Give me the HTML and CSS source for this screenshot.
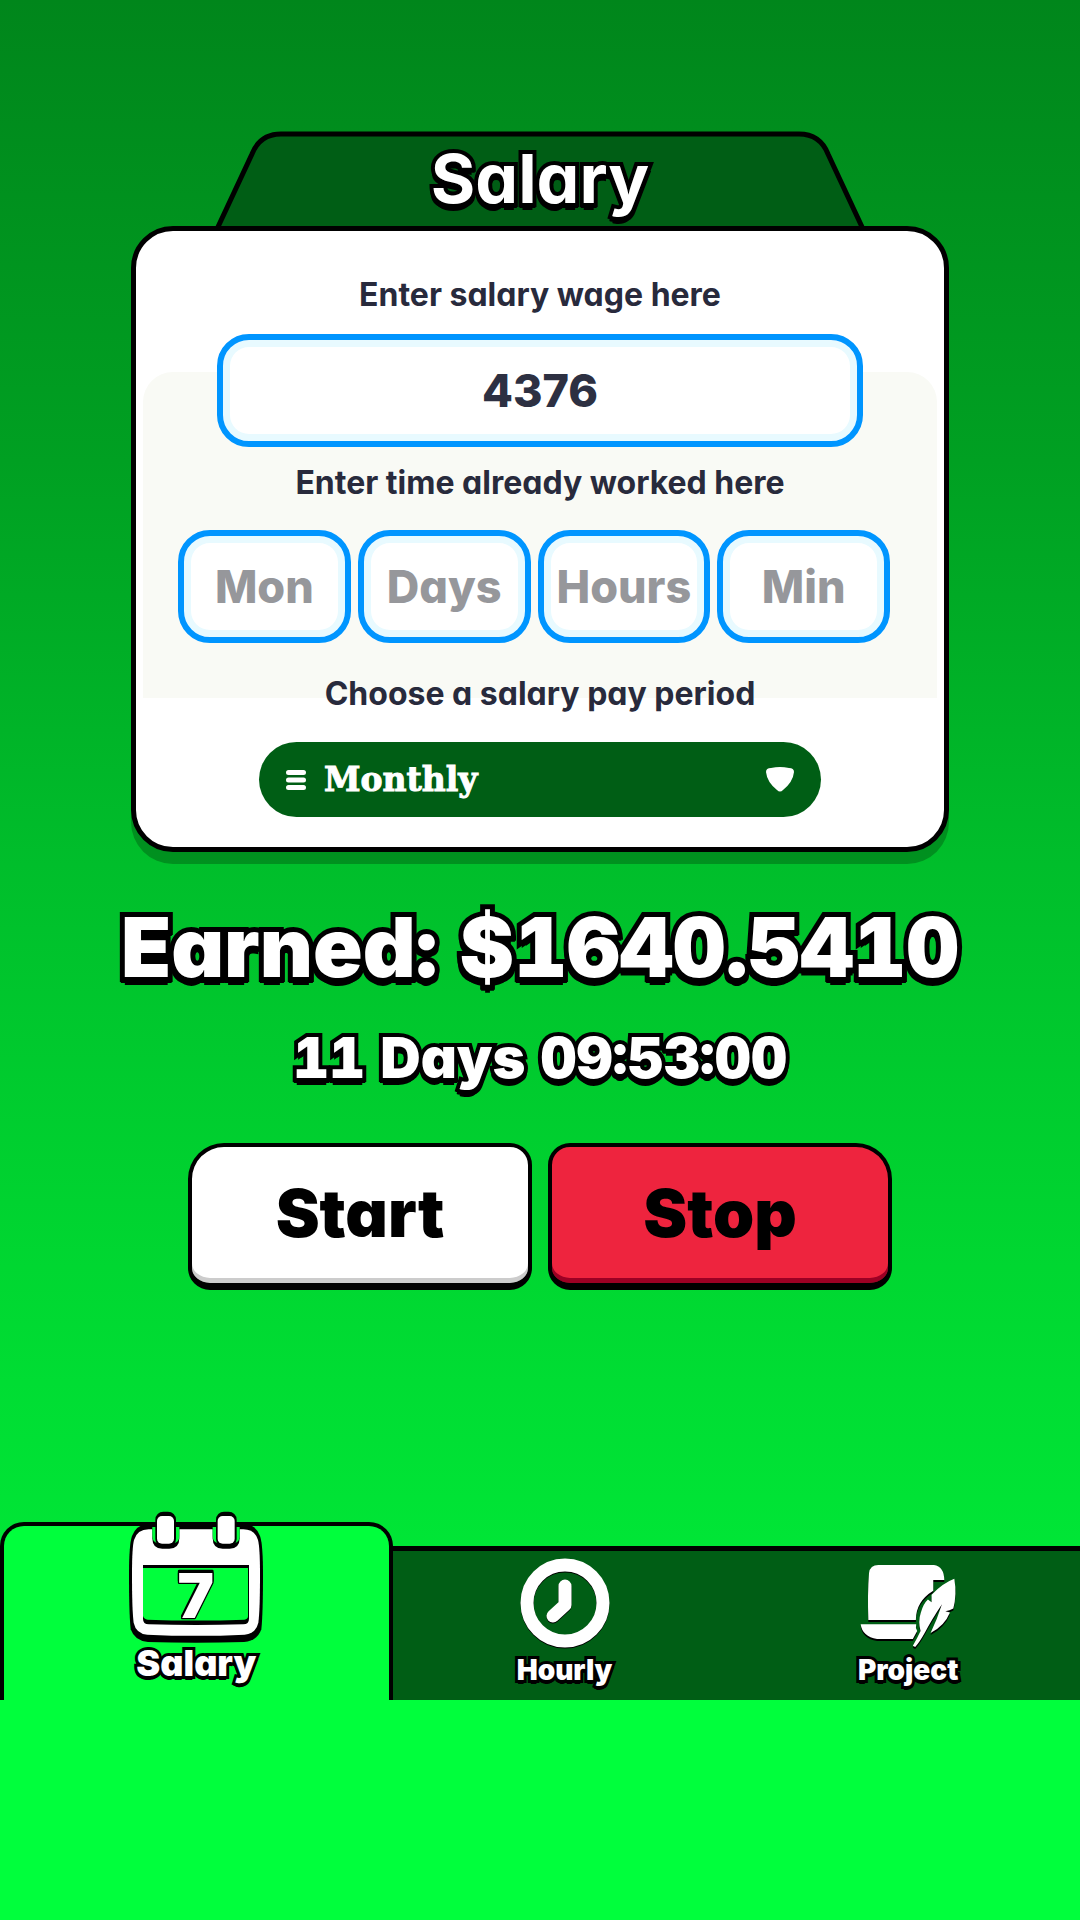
FILE: index.html
```html
<!DOCTYPE html>
<html lang="en">
<head>
    <meta charset="UTF-8">
    <meta name="viewport" content="width=device-width, initial-scale=1.0">
    <title>Salary</title>
    <link rel="stylesheet" href="styles.css">
</head>
<body>
    <main>
        <header class="title-tab">
            <svg class="title-shape" viewBox="0 0 652 98" aria-hidden="true">
                <path d="M3 98 L38 23 Q46 3 67 3 H585 Q606 3 614 23 L649 98" />
            </svg>
            <h1 class="outlined">Salary</h1>
        </header>

        <form class="card">
            <label for="wage">Enter salary wage here</label>
            <input class="field wage" id="wage" type="text" inputmode="decimal" value="4376">

            <p class="label" id="worked-label">Enter time already worked here</p>
            <div class="time-row" role="group" aria-labelledby="worked-label">
                <input class="field" type="text" placeholder="Mon" aria-label="Months">
                <input class="field" type="text" placeholder="Days" aria-label="Days">
                <input class="field" type="text" placeholder="Hours" aria-label="Hours">
                <input class="field" type="text" placeholder="Min" aria-label="Minutes">
            </div>

            <label for="period">Choose a salary pay period</label>
            <div class="dropdown">
                <svg class="lines-icon" viewBox="0 0 20 20" aria-hidden="true">
                    <path d="M2.5 2.5 H17.5 M2.5 10 H17.5 M2.5 17.5 H17.5" />
                </svg>
                <select id="period">
                    <option>Monthly</option>
                    <option>Weekly</option>
                    <option>Yearly</option>
                </select>
                <svg class="arrow-icon" viewBox="0 0 28 25" aria-hidden="true">
                    <path d="M0 5 Q0 1 5 1 Q14 -1 23 1 Q28 1 28 5 Q27 15 17 23 Q14 26 11 23 Q1 15 0 5 Z" />
                </svg>
            </div>
        </form>

        <!-- Running total -->
        <p class="earned outlined">Earned: $1640.5410</p>
        <p class="elapsed outlined">11 Days 09:53:00</p>

        <div class="buttons">
            <button class="btn start" type="button">Start</button>
            <button class="btn stop" type="button">Stop</button>
        </div>
    </main>

    <nav>
        <a class="tab active" href="#salary">
            <svg class="calendar-icon" viewBox="387 60 402 396" aria-hidden="true">
                <path d="M387 250 Q387 160 396 135 Q410 98 450 98 H726 Q766 98 780 135 Q789 160 789 250 Q789 370 784 415 Q772 450 732 453 Q588 458 444 453 Q404 450 392 415 Q387 370 387 250 Z" />
                <path class="white" d="M396 250 Q396 170 402 147 Q412 115 446 115 H730 Q764 115 774 147 Q780 170 780 250 Q780 360 775 395 Q768 428 734 431 Q588 438 442 431 Q408 428 401 395 Q396 360 396 250 Z" />
                <path d="M429 222 H747 V383 Q747 400 730 400 Q588 404 446 400 Q429 400 429 383 Z" />
                <path class="green" d="M429 231 H744 V375 Q744 385 733 386 Q588 391 443 386 Q432 385 429 375 Z" />
                <path d="M457 108 H538 V142 Q538 173 508 173 H487 Q457 173 457 142 Z" />
                <path class="green" d="M457 108 H538 V135 Q538 155 520 157 H475 Q457 155 457 135 Z" />
                <path d="M638 108 H719 V142 Q719 173 689 173 H668 Q638 173 638 142 Z" />
                <path class="green" d="M638 108 H719 V135 Q719 155 701 157 H656 Q638 155 638 135 Z" />
                <rect x="466" y="62" width="62" height="106" rx="24" />
                <rect class="white" x="471" y="75" width="51" height="83" rx="15" />
                <rect x="648" y="62" width="62" height="106" rx="24" />
                <rect class="white" x="653" y="75" width="51" height="83" rx="15" />
                <text class="day-edge" x="587" y="375" text-anchor="middle">7</text>
                <text class="day" x="587" y="382" text-anchor="middle">7</text>
            </svg>
            <span class="outlined">Salary</span>
        </a>
        <a class="tab" href="#hourly">
            <svg class="clock-icon" viewBox="0 0 90 91" aria-hidden="true">
                <g class="clock-shadow">
                    <circle cx="45" cy="46" r="38" />
                    <path d="M45 29 V48 L33 59" />
                </g>
                <g class="clock-face">
                    <circle cx="45" cy="45" r="38" />
                    <path d="M45 28 V47 L33 58" />
                </g>
            </svg>
            <span class="outlined">Hourly</span>
        </a>
        <a class="tab" href="#project">
            <svg class="project-icon" viewBox="245 133 290 254" aria-hidden="true">
                <defs>
                    <g id="scroll">
                        <path d="M270 300 Q267 225 272 160 Q275 136 300 136 H466 Q496 140 497 181 H464 V213 Q412 245 412 300 Z" />
                        <path d="M247 313 H413 Q410 325 416 333 L403 357 H296 Q252 350 247 313 Z" />
                        <path d="M527 177 Q535 225 524 266 Q513 273 500 274 L514 278 Q498 318 456 339 Q475 300 490 253 Q460 298 440 336 Q424 365 410 381 L403 377 Q416 355 426 333 Q418 305 427 278 Q434 252 448 239 L459 247 V225 Q492 190 527 177 Z" />
                    </g>
                </defs>
                <use href="#scroll" y="6" />
                <use class="white" href="#scroll" />
            </svg>
            <span class="outlined">Project</span>
        </a>
    </nav>
</body>
</html>
```
FILE: styles.css
```css
* {
    box-sizing: border-box;
}

body {
    margin: 0;
    min-height: 100vh;
    display: flex;
    flex-direction: column;
    background: linear-gradient(#00861b 0%, #00a022 24%, #00be2b 45%, #00d731 66%, #00e636 81%, #00ff3c 88%);
    font-family: Inter, "Liberation Sans", sans-serif;
    font-feature-settings: "cv11";
    font-weight: 900;
}

main {
    padding: 131px 131px 0;
    text-align: center;
}

/* White text with a black edge, thicker at the bottom */
.outlined {
    color: #fff;
    -webkit-text-stroke: 8px #000;
    paint-order: stroke fill;
    text-shadow: -3px 5px 0 #000, 3px 5px 0 #000, 0 7px 0 #000;
}

/* Title above the card */
.title-tab {
    display: grid;
    justify-content: center;
    height: 95px;
}

.title-tab > * {
    grid-area: 1 / 1;
}

.title-shape {
    width: 652px;
    height: 98px;
    fill: #005e15;
    stroke: #000;
    stroke-width: 5px;
}

h1 {
    margin: 0;
    font-size: 68px;
    line-height: 94px;
}

.card {
    position: relative;
    display: flex;
    flex-direction: column;
    align-items: center;
    padding: 44px 0 30px;
    background: #fff;
    border: 5px solid #000;
    border-radius: 42px;
    box-shadow: 0 12px 0 rgba(0, 100, 20, 0.5);
}

/* Pale panel behind the fields */
.card::before {
    content: "";
    position: absolute;
    top: 141px;
    left: 7px;
    right: 7px;
    height: 326px;
    background: #f9faf5;
    border-radius: 30px 30px 0 0;
}

.card > * {
    position: relative;
}

label, .label {
    margin: 0;
    color: #282a3c;
    font-size: 32px;
    font-weight: 700;
    line-height: 40px;
}

.field {
    min-width: 0;
    width: 100%;
    height: 113px;
    padding: 0;
    background: #fff;
    border: 6px solid #0095ff;
    border-radius: 32px;
    box-shadow: inset 0 0 0 7px #e8faff;
    color: #2d3042;
    font: inherit;
    font-size: 45px;
    font-weight: 800;
    text-align: center;
}

.field::placeholder {
    color: #96979b;
    opacity: 1;
}

.wage {
    width: 80%;
    margin: 19px 0 16px;
}

.time-row {
    display: flex;
    gap: 7px;
    width: 100%;
    padding: 27px 54px 31px 42px;
}

.dropdown {
    display: flex;
    align-items: center;
    width: 562px;
    max-width: 100%;
    height: 75px;
    margin-top: 28px;
    padding: 0 27px;
    background: #005e15;
    border-radius: 38px;
}

.dropdown select {
    flex: 1;
    height: 100%;
    padding: 0 18px;
    appearance: none;
    background: none;
    border: 0;
    color: #fff;
    -webkit-text-stroke: 1px #fff;
    font-family: "DejaVu Serif", serif;
    font-size: 33px;
    font-weight: 700;
}

.lines-icon {
    width: 20px;
    height: 20px;
    stroke: #fff;
    stroke-width: 5px;
    stroke-linecap: round;
}

.arrow-icon {
    width: 28px;
    height: 25px;
    fill: #fff;
}

.earned, .elapsed {
    margin: 48px -60px 0;
    font-size: 82px;
    line-height: 96px;
    white-space: nowrap;
    font-variant-numeric: tabular-nums;
}

.earned {
    -webkit-text-stroke-width: 10px;
    text-shadow: -4px 6px 0 #000, 4px 6px 0 #000, 0 8px 0 #000;
}

.elapsed {
    margin-top: 30px;
    font-size: 56px;
    line-height: 64px;
}

.buttons {
    display: flex;
    gap: 16px;
    margin: 53px 57px 0;
}

.btn {
    flex: 1;
    height: 147px;
    padding: 0 0 4px;
    border: 4px solid #000;
    border-bottom-width: 7px;
    border-radius: 22px;
    color: #000;
    font: inherit;
    font-size: 66px;
}

.start {
    background: #fff;
    border-top-left-radius: 36px;
    box-shadow: inset 0 -5px 0 #ccc;
}

.stop {
    background: #ee243e;
    border-top-right-radius: 36px;
    box-shadow: inset 0 -5px 0 #9c0024;
}

/* Bottom navigation */
nav {
    display: grid;
    grid-template-columns: 8fr 7fr 7fr;
    align-items: end;
    margin: auto 0 0;
    padding-bottom: 220px;
    background: linear-gradient(transparent 178px, #00ff3c 178px);
}

.tab {
    display: flex;
    flex-direction: column;
    align-items: center;
    justify-content: flex-end;
    gap: 5px;
    height: 154px;
    padding-bottom: 14px;
    background: #005e15;
    border-top: 5px solid #000;
    font-size: 28px;
    line-height: 32px;
    text-decoration: none;
}

.tab .outlined {
    -webkit-text-stroke-width: 6px;
    text-shadow: -2px 3px 0 #000, 2px 3px 0 #000, 0 4px 0 #000;
}

.tab.active {
    gap: 0;
    height: 178px;
    padding-bottom: 17px;
    background: #00ff3c;
    border: 4px solid #000;
    border-bottom: 0;
    border-radius: 24px 24px 0 0;
    font-size: 36px;
    line-height: 40px;
}

.calendar-icon {
    flex: none;
    width: 134px;
    height: 132px;
}

.white {
    fill: #fff;
}

.green {
    fill: #00ff3c;
}

.day, .day-edge {
    font-size: 184px;
    stroke: #000;
    stroke-width: 8px;
    stroke-linejoin: round;
    paint-order: stroke fill;
}

.day {
    fill: #fff;
}

.clock-icon {
    width: 90px;
    height: 91px;
    fill: none;
    stroke-width: 13px;
    stroke-linecap: round;
    stroke-linejoin: round;
}

.clock-shadow {
    stroke: #000;
}

.clock-face {
    stroke: #fff;
}

.project-icon {
    width: 97px;
    height: 85px;
}
```
